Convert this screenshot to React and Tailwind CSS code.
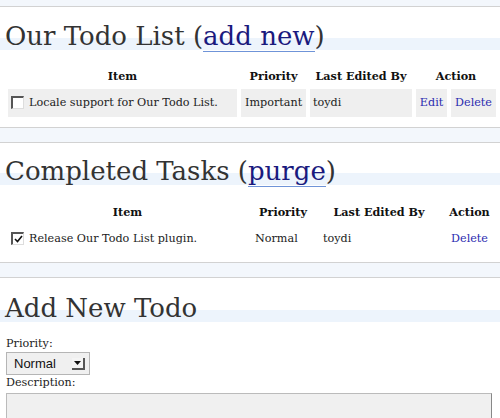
import React from "react";

const band = "bg-[#f3f7fc]";

function Separator({ top = false }) {
  if (top) {
    return (
      <div>
        <div className={`h-[6px] ${band}`} />
        <div className="h-px bg-[#d2d2d2]" />
      </div>
    );
  }
  return (
    <div>
      <div className="h-px bg-[#d2d2d2]" />
      <div className={`h-[14px] ${band}`} />
      <div className="h-px bg-[#d2d2d2]" />
    </div>
  );
}

function Heading({ children, className = "" }) {
  return (
    <h2
      className={`pl-[5px] h-[30px] text-[26px] leading-[30px] font-normal text-[#333] bg-[linear-gradient(to_bottom,transparent_17px,#edf4fc_17px,#edf4fc_29px,transparent_29px)] ${className}`}
    >
      {children}
    </h2>
  );
}

function Checkbox({ checked }) {
  return (
    <span className="inline-flex items-center justify-center w-[13px] h-[13px] border-t-2 border-l-2 border-t-[#555] border-l-[#555] border-b border-r border-b-[#ddd] border-r-[#ddd] bg-white align-middle mr-[5px]">
      {checked && (
        <svg width="9" height="8" viewBox="0 0 9 8">
          <path d="M1 4 L3.5 6.5 L8 1" fill="none" stroke="#111" strokeWidth="1.6" />
        </svg>
      )}
    </span>
  );
}

const link = "text-[#2b2bb0]";
const serif = "font-['DejaVu_Serif',serif]";
const th = "font-bold h-[18px] leading-[14px] align-bottom pb-[2px] p-0";

export default function App() {
  return (
    <div className={`w-[500px] h-[418px] overflow-hidden bg-white ${serif} text-[#222]`}>
      <Separator top />

      <Heading className="mt-[14px]">
        Our Todo List (
        <a className="text-[#1a1a7e] border-b border-[#6f94d8]">add new</a>)
      </Heading>

      <table className="mt-[12px] ml-[4px] w-[496px] table-fixed border-separate border-spacing-[4px] text-[11.2px]">
        <colgroup>
          <col className="w-[229px]" />
          <col className="w-[65px]" />
          <col className="w-[102px]" />
          <col className="w-[31px]" />
          <col className="w-[45px]" />
        </colgroup>
        <thead>
          <tr className="text-[#111]">
            <th className={th}>Item</th>
            <th className={th}>Priority</th>
            <th className={th}>Last Edited By</th>
            <th className={th} colSpan={2}>Action</th>
          </tr>
        </thead>
        <tbody>
          <tr className="h-[28px]">
            <td className="bg-[#efefef] pl-[3px] whitespace-nowrap">
              <Checkbox />
              Locale support for Our Todo List.
            </td>
            <td className="bg-[#efefef] pl-[4px]">Important</td>
            <td className="bg-[#efefef] pl-[3px]">toydi</td>
            <td className={`bg-[#efefef] text-center ${link}`}>Edit</td>
            <td className={`bg-[#efefef] text-center ${link}`}>Delete</td>
          </tr>
        </tbody>
      </table>

      <div className="mt-[6px]">
        <Separator />
      </div>

      <Heading className="mt-[13px]">
        Completed Tasks (
        <a className="text-[#1a1a7e] border-b border-[#6f94d8]">purge</a>)
      </Heading>

      <table className="mt-[13px] ml-[4px] w-[496px] table-fixed border-separate border-spacing-[4px] text-[11.2px]">
        <colgroup>
          <col className="w-[239px]" />
          <col className="w-[64px]" />
          <col className="w-[120px]" />
          <col className="w-[53px]" />
        </colgroup>
        <thead>
          <tr className="text-[#111]">
            <th className={th}>Item</th>
            <th className={th}>Priority</th>
            <th className={th}>Last Edited By</th>
            <th className={th}>Action</th>
          </tr>
        </thead>
        <tbody>
          <tr className="h-[28px]">
            <td className="pl-[3px] whitespace-nowrap">
              <Checkbox checked />
              Release Our Todo List plugin.
            </td>
            <td className="pl-[4px]">Normal</td>
            <td className="pl-[4px]">toydi</td>
            <td className={`text-center ${link}`}>Delete</td>
          </tr>
        </tbody>
      </table>

      <div className="mt-[5px]">
        <Separator />
      </div>

      <Heading className="mt-[15px]">Add New Todo</Heading>

      <div className={`px-[6px] text-[11.2px] ${serif} text-[#222]`}>
        <div className="mt-[15px] leading-[12px]">Priority:</div>
        <div className="mt-[2px] w-[84px] h-[23px] flex items-center justify-between bg-[#f0f0f0] border border-[#b5b5b5] pl-[7px] pr-[4px]">
          <span className="font-['Liberation_Sans',sans-serif] text-[13px] text-[#111]">Normal</span>
          <span className="w-[13px] h-[12px] flex items-center justify-center bg-[#f4f4f4] border-r-2 border-b-2 border-r-[#555] border-b-[#555]">
            <svg width="7" height="4" viewBox="0 0 7 4">
              <path d="M0 0 H7 L3.5 4 Z" fill="#111" />
            </svg>
          </span>
        </div>
        <div className="mt-[2px] leading-[12px]">Description:</div>
        <div className="mt-[4px] w-[486px] h-[40px] bg-[#f0f0f0] border-t border-l border-[#bbb] border-r border-r-[#888]" />
      </div>
    </div>
  );
}
